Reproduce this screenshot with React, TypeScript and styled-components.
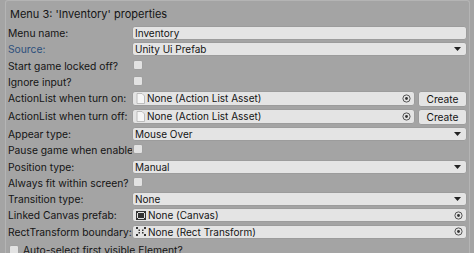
import React from 'react';
import styled, { createGlobalStyle } from 'styled-components';

const GlobalStyle = createGlobalStyle`
  html, body {
    margin: 0;
    padding: 0;
    background: #a4a4a4;
  }
  body {
    font-family: Inter, 'Noto Sans', sans-serif;
    font-size: 10.3px;
    color: #141414;
    overflow: hidden;
  }
`;

const Panel = styled.div`
  margin: 0 4px 0 5px;
  height: 260px;
  box-sizing: border-box;
  border: 1px solid #b4b4b4;
  border-bottom: none;
  border-radius: 3px 3px 0 0;
  padding: 5px 2px 0 2px;
`;

const Title = styled.div`
  height: 16px;
  line-height: 16px;
  font-size: 11px;
  padding-left: 2px;
  margin-bottom: 4px;
`;

const Row = styled.div<{ $tall?: boolean }>`
  display: grid;
  grid-template-columns: 124px 1fr;
  align-items: start;
  height: ${(p) => (p.$tall ? '18px' : '16.25px')};
`;

const Label = styled.div<{ $link?: boolean }>`
  height: 14px;
  line-height: 14px;
  white-space: nowrap;
  overflow: hidden;
  color: ${(p) => (p.$link ? '#2c4f7c' : '#141414')};
`;

const Field = styled.div<{ $tall?: boolean }>`
  box-sizing: border-box;
  height: ${(p) => (p.$tall ? '15px' : '14px')};
  line-height: ${(p) => (p.$tall ? '13px' : '12px')};
  background: #e4e4e4;
  border: 1px solid #9c9c9c;
  border-radius: 3px;
  padding: 0 5px 0 2px;
  display: flex;
  align-items: center;
  gap: 2px;
  min-width: 0;
  font-size: 10px;
`;

const FieldText = styled.span`
  flex: 1;
  white-space: nowrap;
  overflow: hidden;
`;

const Check = styled.div`
  width: 10px;
  height: 10px;
  margin: 1px 0 0 1px;
  box-sizing: border-box;
  background: #e2e2e2;
  border: 1px solid #a0a0a0;
  border-radius: 2px;
`;

const Pair = styled.div`
  display: flex;
  gap: 3px;
`;

const ObjectField = styled(Field)`
  flex: 1;
  padding: 0 3px 0 3px;
`;

const CreateButton = styled.div`
  box-sizing: border-box;
  width: 49px;
  height: 16px;
  line-height: 14px;
  text-align: center;
  background: #e4e4e4;
  border: 1px solid #9c9c9c;
  border-radius: 3px;
  font-size: 10.2px;
`;

const AutoRow = styled.div`
  display: flex;
  align-items: center;
  gap: 4px;
  height: 14px;
  margin-top: 2px;
`;

const Arrow = () => (
  <svg width="7" height="4" viewBox="0 0 7 4">
    <path d="M0 0h7L3.5 4z" fill="#222" />
  </svg>
);

const Target = () => (
  <svg width="9" height="9" viewBox="0 0 9 9">
    <circle cx="4.5" cy="4.5" r="3.6" fill="none" stroke="#444" strokeWidth="0.9" />
    <circle cx="4.5" cy="4.5" r="1.4" fill="#333" />
  </svg>
);

const DocIcon = () => (
  <svg width="9" height="11" viewBox="0 0 9 11">
    <path d="M1 0.5h5l2.5 2.5v7.5h-7.5z" fill="#f6f6f6" stroke="#b0b0b0" strokeWidth="0.8" />
  </svg>
);

const CanvasIcon = () => (
  <svg width="10" height="9" viewBox="0 0 10 9">
    <rect x="0.5" y="0.5" width="9" height="8" fill="none" stroke="#333" strokeWidth="1" />
    <rect x="2" y="2" width="6" height="5" fill="#333" />
    <path d="M0 0l2 2M10 0l-2 2M0 9l2-2M10 9l-2-2" stroke="#333" strokeWidth="1" />
  </svg>
);

const RectIcon = () => (
  <svg width="10" height="9" viewBox="0 0 10 9">
    <g fill="#333">
      <rect x="0" y="0" width="2" height="2" />
      <rect x="8" y="0" width="2" height="2" />
      <rect x="0" y="7" width="2" height="2" />
      <rect x="8" y="7" width="2" height="2" />
      <rect x="2.5" y="2.5" width="1.5" height="1.5" />
      <rect x="6" y="2.5" width="1.5" height="1.5" />
      <rect x="2.5" y="5" width="1.5" height="1.5" />
      <rect x="6" y="5" width="1.5" height="1.5" />
    </g>
  </svg>
);

const Popup: React.FC<{ label: string; value: string }> = ({ label, value }) => (
  <Row>
    <Label>{label}</Label>
    <Field>
      <FieldText>{value}</FieldText>
      <Arrow />
    </Field>
  </Row>
);

const Toggle: React.FC<{ label: string }> = ({ label }) => (
  <Row>
    <Label>{label}</Label>
    <Check />
  </Row>
);

const ActionListRow: React.FC<{ label: string }> = ({ label }) => (
  <Row $tall>
    <Label>{label}</Label>
    <Pair>
      <ObjectField $tall>
        <DocIcon />
        <FieldText>None (Action List Asset)</FieldText>
        <Target />
      </ObjectField>
      <CreateButton>Create</CreateButton>
    </Pair>
  </Row>
);

const ObjectRow: React.FC<{ label: string; value: string; icon: React.ReactNode }> = ({
  label,
  value,
  icon,
}) => (
  <Row>
    <Label>{label}</Label>
    <ObjectField>
      {icon}
      <FieldText>{value}</FieldText>
      <Target />
    </ObjectField>
  </Row>
);

export default function App() {
  return (
    <>
      <GlobalStyle />
      <Panel>
        <Title>Menu 3: 'Inventory' properties</Title>
        <Row>
          <Label>Menu name:</Label>
          <Field>
            <FieldText>Inventory</FieldText>
          </Field>
        </Row>
        <Row>
          <Label $link>Source:</Label>
          <Field>
            <FieldText>Unity Ui Prefab</FieldText>
            <Arrow />
          </Field>
        </Row>
        <Toggle label='Start game locked off?' />
        <Toggle label='Ignore input?' />
        <ActionListRow label='ActionList when turn on:' />
        <ActionListRow label='ActionList when turn off:' />
        <Popup label='Appear type:' value='Mouse Over' />
        <Toggle label='Pause game when enabled?' />
        <Popup label='Position type:' value='Manual' />
        <Toggle label='Always fit within screen?' />
        <Popup label='Transition type:' value='None' />
        <ObjectRow label='Linked Canvas prefab:' value='None (Canvas)' icon={<CanvasIcon />} />
        <ObjectRow
          label='RectTransform boundary:'
          value='None (Rect Transform)'
          icon={<RectIcon />}
        />
        <AutoRow>
          <Check />
          <span>Auto-select first visible Element?</span>
        </AutoRow>
      </Panel>
    </>
  );
}
